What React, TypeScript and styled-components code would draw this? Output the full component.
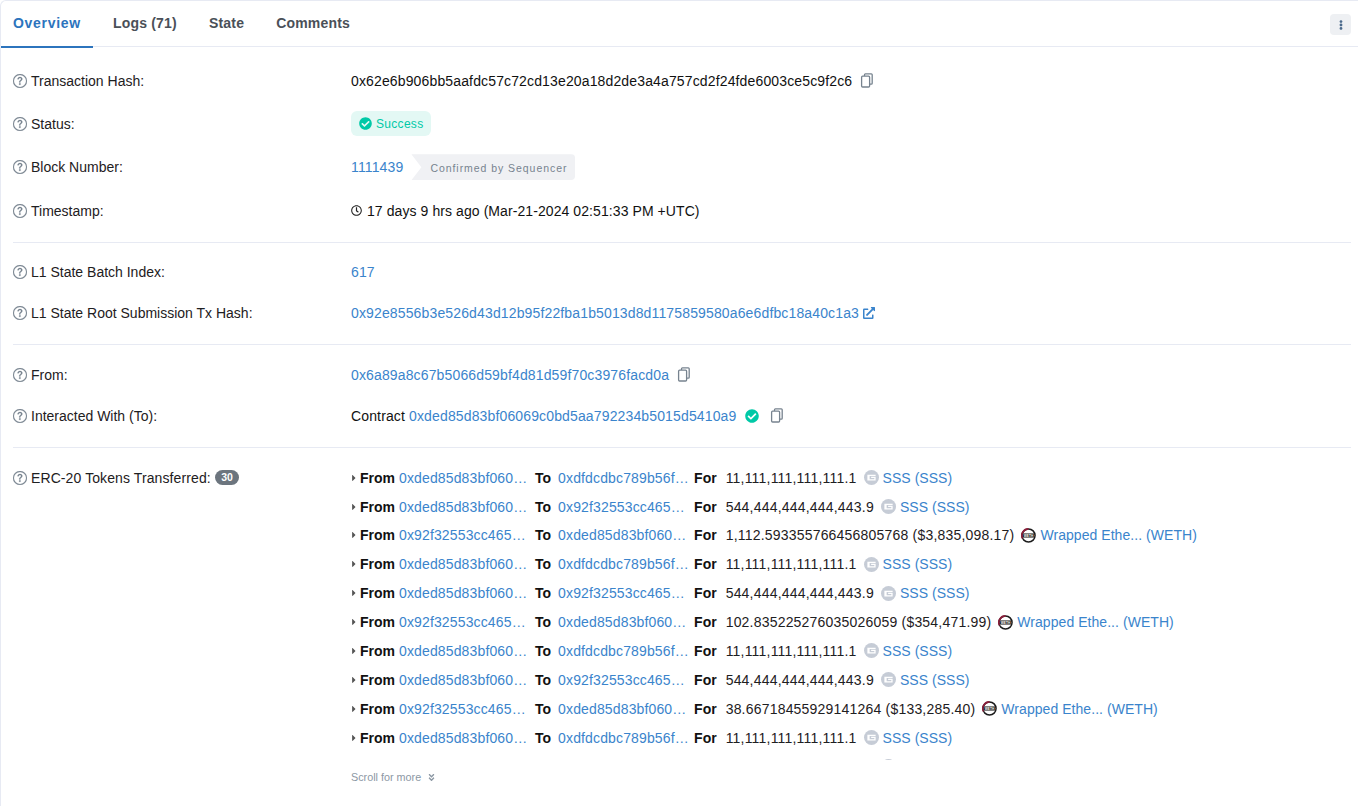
import React from 'react';
import styled, { createGlobalStyle } from 'styled-components';
import { BsQuestionCircle } from 'react-icons/bs';
import { FaCaretRight, FaCheckCircle, FaEllipsisV, FaExternalLinkAlt, FaRegClock, FaAngleDoubleDown } from 'react-icons/fa';

const GlobalStyle = createGlobalStyle`
  html, body {
    margin: 0;
    height: 100%;
    overflow: hidden;
    background: #fff;
    font-family: "Liberation Sans", Arial, sans-serif;
    font-size: 14px;
    color: #111;
  }
`;

const LINK = '#3a84cc';
const GREY = '#77838f';

const Card = styled.div`
  height: 806px;
  box-sizing: border-box;
  border-top: 1px solid #e7eaf3;
  border-left: 1px solid #e7eaf3;
  border-top-left-radius: 6px;
  overflow: hidden;
`;

const TabBar = styled.div`
  display: flex;
  align-items: stretch;
  gap: 8px;
  height: 46px;
  box-sizing: border-box;
  padding-right: 7px;
  border-bottom: 1.5px solid #e7eaf3;
`;

const Tab = styled.div<{ $active?: boolean }>`
  display: flex;
  align-items: center;
  padding: 0 12px;
  margin-bottom: -1.5px;
  font-weight: 700;
  font-size: 14px;
  letter-spacing: ${(p) => (p.$active ? '0.7px' : '0.2px')};
  color: ${(p) => (p.$active ? '#2c74bd' : '#4a5058')};
  border-bottom: 2px solid ${(p) => (p.$active ? '#2c74bd' : 'transparent')};
`;

const MenuButton = styled.div`
  margin: 13px 0 auto auto;
  width: 21px;
  height: 21px;
  display: flex;
  align-items: center;
  justify-content: center;
  border-radius: 4px;
  background: #eef0f3;
  color: #4b6a8c;
  font-size: 10px;
`;

const Body = styled.div`
  padding: 12px 7px 0 12px;
`;

const Row = styled.div<{ $h: number }>`
  display: grid;
  grid-template-columns: 338px 1fr;
  align-items: center;
  height: ${(p) => p.$h}px;
`;

const Label = styled.div`
  display: flex;
  align-items: center;
  gap: 4px;
  color: #1e2022;
  svg {
    width: 14px;
    height: 14px;
    color: ${GREY};
    stroke: currentColor;
    stroke-width: 0.3px;
    flex: none;
  }
`;

const Value = styled.div`
  display: flex;
  align-items: center;
  min-width: 0;
  letter-spacing: 0.14px;
`;

const Link = styled.span`
  color: ${LINK};
`;

const Rule = styled.hr<{ $top: number; $bottom: number }>`
  border: 0;
  height: 1px;
  background: #e7eaf3;
  margin: ${(p) => p.$top}px 0 ${(p) => p.$bottom}px;
`;

const CopyButton = styled.span<{ $gap: number }>`
  display: inline-flex;
  margin-left: ${(p) => p.$gap}px;
  color: ${GREY};
`;

const StatusBadge = styled.span`
  display: inline-flex;
  align-items: center;
  gap: 4px;
  height: 25px;
  padding: 0 8px;
  border-radius: 6px;
  background: #e3f8f4;
  color: #00c9a7;
  font-size: 12px;
  letter-spacing: 0.3px;
  svg {
    width: 13px;
    height: 13px;
  }
`;

const SequencerTag = styled.span`
  display: inline-flex;
  align-items: center;
  height: 25px;
  margin-left: 8px;
  padding: 1px 8px 0 19px;
  background: #f0f1f4;
  color: ${GREY};
  font-size: 10.5px;
  letter-spacing: 0.95px;
  border-radius: 0 4px 4px 0;
  clip-path: polygon(0 0, 100% 0, 100% 100%, 0 100%, 10px 50%);
`;

const Clock = styled(FaRegClock)`
  width: 11px;
  height: 11px;
  margin-right: 5px;
  color: #222;
`;

const Timestamp = styled.span`
  letter-spacing: 0.08px;
`;

const External = styled(FaExternalLinkAlt)`
  width: 12px;
  height: 12px;
  margin-left: 4px;
  color: ${LINK};
`;

const Verified = styled(FaCheckCircle)`
  width: 14px;
  height: 14px;
  margin-left: 9px;
  color: #00c9a7;
`;

const Plain = styled.span`
  margin-right: 4px;
`;

const CountPill = styled.span`
  padding: 0 6.5px;
  height: 15px;
  line-height: 15px;
  border-radius: 8px;
  background: #6c757e;
  color: #fff;
  font-size: 10.5px;
  font-weight: 700;
  letter-spacing: 0;
`;

const TokensRow = styled.div`
  display: grid;
  grid-template-columns: 338px 1fr;
  align-items: start;
`;

const TokensLabel = styled(Label)`
  height: 29px;
  letter-spacing: 0.1px;
`;

const TransferList = styled.div`
  height: 297px;
  overflow: hidden;
`;

const Transfer = styled.div`
  display: flex;
  align-items: center;
  height: 28.9px;
  white-space: nowrap;
`;

const Caret = styled(FaCaretRight)`
  width: 10px;
  height: 10px;
  margin-left: -2px;
  margin-right: 1px;
  color: #555;
  flex: none;
`;

const Word = styled.b<{ $left?: number }>`
  color: #111;
  margin-left: ${(p) => p.$left ?? 0}px;
  font-weight: 700;
`;

const Address = styled.span`
  display: inline-block;
  width: 127px;
  margin-left: 4px;
  color: ${LINK};
  letter-spacing: 0.14px;
`;

const ToAddress = styled(Address)`
  margin-left: 7px;
`;

const Amount = styled.span`
  margin-left: 9px;
  color: #1e2022;
  letter-spacing: 0.2px;
`;

const TokenName = styled.span`
  margin-left: 4px;
  color: ${LINK};
  letter-spacing: 0.05px;
`;

const TokenIcon = styled.svg`
  width: 15px;
  height: 15px;
  margin-left: 7px;
  flex: none;
`;

const WethLabel = styled.text`
  font-family: "Liberation Sans", Arial, sans-serif;
  font-size: 3.4px;
  font-weight: 700;
  fill: #fff;
  text-anchor: middle;
`;

const ScrollHint = styled.div`
  display: flex;
  align-items: center;
  gap: 6px;
  margin: 11px 0 0 338px;
  font-size: 10.8px;
  color: #8c98a4;
  svg {
    width: 9px;
    height: 9px;
  }
`;

const QuestionIcon = () => <BsQuestionCircle />;

const CopyIcon = () => (
  <svg width="14" height="15" viewBox="0 0 14 15" fill="none" stroke="currentColor" strokeWidth="1.3">
    <path d="M4.5 3V1.7c0-.5.4-.9.9-.9h5.9c.5 0 .9.4.9.9v8.6c0 .5-.4.9-.9.9H10" />
    <rect x="1.6" y="3.2" width="8" height="10.8" rx="1" />
  </svg>
);

const SssIcon = () => (
  <TokenIcon viewBox="0 0 16 16">
    <circle cx="8" cy="8" r="8" fill="#c6ccd6" />
    <path d="M3.6 5h8.8v1.4H6v3.4h5v-1.3H7.6V7.3h4.8v3.9H3.6z" fill="#fff" />
  </TokenIcon>
);

const WethIcon = () => (
  <TokenIcon viewBox="0 0 16 16">
    <circle cx="8" cy="8" r="7" fill="#fff" stroke="#1c1c1c" strokeWidth="1.6" />
    <path d="M1.6 11A7 7 0 0 1 8 1" fill="none" stroke="#8c1d3a" strokeWidth="1.8" />
    <rect x="2" y="5.8" width="12" height="4.4" fill="#222" />
    <WethLabel x="8" y="9.2">WETH</WethLabel>
  </TokenIcon>
);

type TTransfer = {
  from: string;
  to: string;
  amount: string;
  weth?: boolean;
};

const DED = '0xded85d83bf060…';
const DFD = '0xdfdcdbc789b56f…';
const F32 = '0x92f32553cc465…';

const transfers: TTransfer[] = [
  { from: DED, to: DFD, amount: '11,111,111,111,111.1' },
  { from: DED, to: F32, amount: '544,444,444,444,443.9' },
  { from: F32, to: DED, amount: '1,112.593355766456805768 ($3,835,098.17)', weth: true },
  { from: DED, to: DFD, amount: '11,111,111,111,111.1' },
  { from: DED, to: F32, amount: '544,444,444,444,443.9' },
  { from: F32, to: DED, amount: '102.835225276035026059 ($354,471.99)', weth: true },
  { from: DED, to: DFD, amount: '11,111,111,111,111.1' },
  { from: DED, to: F32, amount: '544,444,444,444,443.9' },
  { from: F32, to: DED, amount: '38.66718455929141264 ($133,285.40)', weth: true },
  { from: DED, to: DFD, amount: '11,111,111,111,111.1' },
  { from: DED, to: F32, amount: '544,444,444,444,443.9' },
];

const Field: React.FC<{ label: string; h: number; children: React.ReactNode }> = ({ label, h, children }) => (
  <Row $h={h}>
    <Label>
      <QuestionIcon />
      {label}
    </Label>
    <Value>{children}</Value>
  </Row>
);

export default function App() {
  return (
    <Card>
      <GlobalStyle />
      <TabBar>
        <Tab $active>Overview</Tab>
        <Tab>Logs (71)</Tab>
        <Tab>State</Tab>
        <Tab>Comments</Tab>
        <MenuButton>
          <FaEllipsisV />
        </MenuButton>
      </TabBar>

      <Body>
        <Field label="Transaction Hash:" h={43.3}>
          0x62e6b906bb5aafdc57c72cd13e20a18d2de3a4a757cd2f24fde6003ce5c9f2c6
          <CopyButton $gap={8}><CopyIcon /></CopyButton>
        </Field>
        <Field label="Status:" h={43.3}>
          <StatusBadge>
            <FaCheckCircle />
            Success
          </StatusBadge>
        </Field>
        <Field label="Block Number:" h={43.3}>
          <Link>1111439</Link>
          <SequencerTag>Confirmed by Sequencer</SequencerTag>
        </Field>
        <Field label="Timestamp:" h={43.3}>
          <Clock />
          <Timestamp>17 days 9 hrs ago (Mar-21-2024 02:51:33 PM +UTC)</Timestamp>
        </Field>

        <Rule $top={10} $bottom={8} />

        <Field label="L1 State Batch Index:" h={41}>
          <Link>617</Link>
        </Field>
        <Field label="L1 State Root Submission Tx Hash:" h={41}>
          <Link>0x92e8556b3e526d43d12b95f22fba1b5013d8d1175859580a6e6dfbc18a40c1a3</Link>
          <External />
        </Field>

        <Rule $top={11} $bottom={9} />

        <Field label="From:" h={41}>
          <Link>0x6a89a8c67b5066d59bf4d81d59f70c3976facd0a</Link>
          <CopyButton $gap={8}><CopyIcon /></CopyButton>
        </Field>
        <Field label="Interacted With (To):" h={41}>
          <Plain>Contract</Plain>
          <Link>0xded85d83bf06069c0bd5aa792234b5015d5410a9</Link>
          <Verified />
          <CopyButton $gap={11}><CopyIcon /></CopyButton>
        </Field>

        <Rule $top={11} $bottom={15} />

        <TokensRow>
          <TokensLabel>
            <QuestionIcon />
            ERC-20 Tokens Transferred:
            <CountPill>30</CountPill>
          </TokensLabel>
          <TransferList>
            {transfers.map((t, i) => (
              <Transfer key={i}>
                <Caret />
                <Word>From</Word>
                <Address>{t.from}</Address>
                <Word $left={9}>To</Word>
                <ToAddress>{t.to}</ToAddress>
                <Word $left={9}>For</Word>
                <Amount>{t.amount}</Amount>
                {t.weth ? <WethIcon /> : <SssIcon />}
                <TokenName>{t.weth ? 'Wrapped Ethe... (WETH)' : 'SSS (SSS)'}</TokenName>
              </Transfer>
            ))}
          </TransferList>
        </TokensRow>
        <ScrollHint>
          Scroll for more
          <FaAngleDoubleDown />
        </ScrollHint>
      </Body>
    </Card>
  );
}
